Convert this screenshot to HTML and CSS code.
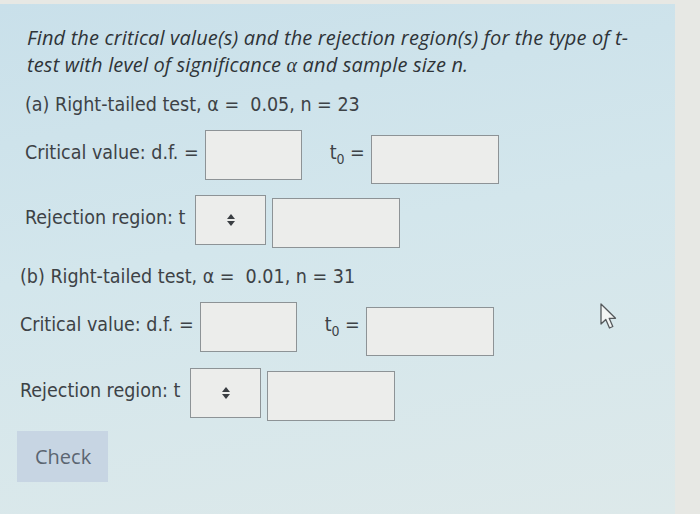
FILE: index.html
```html
<!DOCTYPE html>
<html lang="en">
<head>
    <meta charset="UTF-8">
    <meta name="viewport" content="width=device-width, initial-scale=1.0">
    <title>t-test critical values</title>
    <link rel="stylesheet" href="styles.css">
</head>
<body>
    <div class="panel">
        <p class="prompt">Find the critical value(s) and the rejection region(s) for the type of t-<br>test with level of significance <span class="alpha">α</span> and sample size n.</p>

        <div class="part part-a">
            <p class="given">(a) Right-tailed test, α =&nbsp; 0.05, n = 23</p>
            <div class="row">
                <span class="label">Critical value: d.f. =</span>
                <input class="box box-df" type="text">
                <span class="label t0">t<sub>0</sub> =</span>
                <input class="box box-t" type="text">
            </div>
            <div class="row">
                <span class="label">Rejection region: t</span>
                <div class="select"><span class="arrows"></span></div>
                <input class="box box-rr" type="text">
            </div>
        </div>

        <div class="part part-b">
            <p class="given">(b) Right-tailed test, α =&nbsp; 0.01, n = 31</p>
            <div class="row">
                <span class="label">Critical value: d.f. =</span>
                <input class="box box-df" type="text">
                <span class="label t0">t<sub>0</sub> =</span>
                <input class="box box-t" type="text">
            </div>
            <div class="row">
                <span class="label">Rejection region: t</span>
                <div class="select"><span class="arrows"></span></div>
                <input class="box box-rr" type="text">
            </div>
        </div>

        <button class="check">Check</button>

        <!-- mouse pointer left on the screen -->
        <svg class="cursor" width="20" height="30" viewBox="0 0 20 30">
            <path d="M2 2 L2 22 L6.8 17.5 L10.5 26 L13.8 24.5 L10.2 16.3 L16.5 16.3 Z" fill="#f4f6f5" stroke="#55595c" stroke-width="1.3" stroke-linejoin="round"/>
        </svg>
    </div>
</body>
</html>
```

FILE: styles.css
```css
body {
    margin: 0;
    background: #e7e8e4;
    font-family: "DejaVu Sans Condensed", "Liberation Sans", sans-serif;
    color: #3d4246;
}
.panel {
    position: relative;
    width: 675px;
    height: 510px;
    margin-top: 4px;
    padding: 20px 0 0 0;
    box-sizing: border-box;
    background: linear-gradient(170deg, #c9e0ea 0%, #d3e6ec 45%, #dde9ea 100%);
}
.prompt {
    margin: 0 0 0 27px;
    font-family: "Open Sans", sans-serif;
    font-style: italic;
    font-size: 20px;
    line-height: 27px;
    color: #2f3438;
    letter-spacing: 0.15px;
}
.alpha {
    font-family: "Liberation Serif", serif;
}
.part-a {
    margin: 14px 0 0 25px;
}
.part-b {
    margin: 17px 0 0 20px;
}
.given {
    margin: 0;
    font-size: 19.5px;
    line-height: 24px;
}
.row {
    display: flex;
    align-items: flex-start;
    margin-top: 13px;
    font-size: 19.5px;
}
.row + .row {
    margin-top: 11px;
}
.part-b .row + .row {
    margin-top: 12px;
}
.label {
    line-height: 46px;
}
.box {
    height: 50px;
    box-sizing: border-box;
    border: 1.5px solid #8d9396;
    background: #ecedeb;
    margin: 0;
    padding: 0;
}
.box-df {
    width: 97px;
    margin-left: 6px;
}
.t0 {
    margin-left: 28px;
}
.t0 sub {
    font-size: 14px;
}
.box-t {
    width: 128px;
    height: 49px;
    margin-left: 6px;
    margin-top: 5px;
}
.select {
    width: 71px;
    height: 50px;
    box-sizing: border-box;
    border: 1.5px solid #8d9396;
    background: #ecedeb;
    margin-left: 10px;
    display: flex;
    align-items: center;
    justify-content: center;
}
.arrows {
    position: relative;
    width: 8px;
    height: 12px;
}
.arrows::before,
.arrows::after {
    content: "";
    position: absolute;
    left: 0;
    border-left: 4px solid transparent;
    border-right: 4px solid transparent;
}
.arrows::before {
    top: 0;
    border-bottom: 5px solid #3a3e42;
}
.arrows::after {
    bottom: 0;
    border-top: 5px solid #3a3e42;
}
.box-rr {
    width: 128px;
    margin-left: 6px;
    margin-top: 3px;
}
.check {
    display: block;
    margin: 10px 0 0 17px;
    width: 91px;
    height: 51px;
    border: none;
    background: #c7d5e3;
    color: #5b6571;
    font-family: "Open Sans", sans-serif;
    font-size: 20px;
    text-align: left;
    padding: 0 0 0 18px;
}
.cursor {
    position: absolute;
    left: 599px;
    top: 298px;
}
```
